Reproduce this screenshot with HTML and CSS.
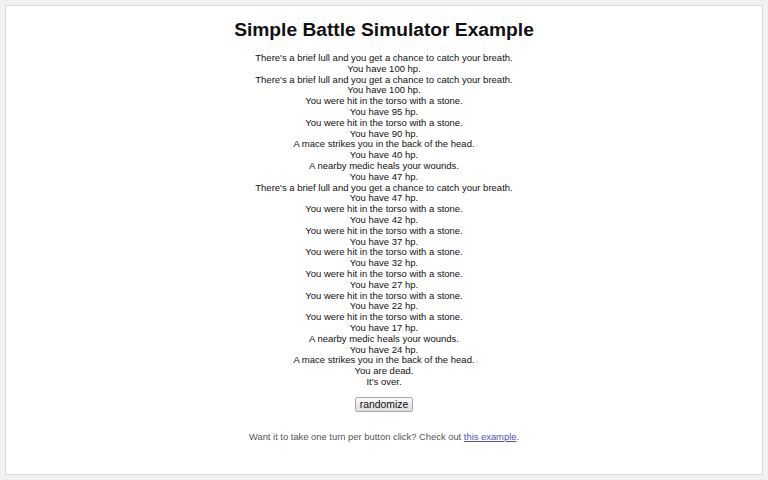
FILE: index.html
```html
<!DOCTYPE html>
<html lang="en">
<head>
  <meta charset="UTF-8" />
  <title>Simple Battle Simulator Example</title>
  <link rel="stylesheet" href="styles.css">
</head>
<body>

  <div class="page">
    <h1>Simple Battle Simulator Example</h1>

    <div id="log" class="log">
      <div>There's a brief lull and you get a chance to catch your breath.</div>
      <div>You have 100 hp.</div>
      <div>There's a brief lull and you get a chance to catch your breath.</div>
      <div>You have 100 hp.</div>
      <div>You were hit in the torso with a stone.</div>
      <div>You have 95 hp.</div>
      <div>You were hit in the torso with a stone.</div>
      <div>You have 90 hp.</div>
      <div>A mace strikes you in the back of the head.</div>
      <div>You have 40 hp.</div>
      <div>A nearby medic heals your wounds.</div>
      <div>You have 47 hp.</div>
      <div>There's a brief lull and you get a chance to catch your breath.</div>
      <div>You have 47 hp.</div>
      <div>You were hit in the torso with a stone.</div>
      <div>You have 42 hp.</div>
      <div>You were hit in the torso with a stone.</div>
      <div>You have 37 hp.</div>
      <div>You were hit in the torso with a stone.</div>
      <div>You have 32 hp.</div>
      <div>You were hit in the torso with a stone.</div>
      <div>You have 27 hp.</div>
      <div>You were hit in the torso with a stone.</div>
      <div>You have 22 hp.</div>
      <div>You were hit in the torso with a stone.</div>
      <div>You have 17 hp.</div>
      <div>A nearby medic heals your wounds.</div>
      <div>You have 24 hp.</div>
      <div>A mace strikes you in the back of the head.</div>
      <div>You are dead.</div>
      <div>It's over.</div>
    </div>

    <button class="randomize">randomize</button>

    <p class="note">Want it to take one turn per button click? Check out <a href="#">this example</a>.</p>
  </div>

</body>
</html>
```

FILE: styles.css
```css
body {
  font-family: "Liberation Sans", Arial, sans-serif;
  background-color: #f2f2f2;
  margin: 0;
  padding: 5px;
  height: 100vh;
  box-sizing: border-box;
}

.page {
  background: white;
  border: 1px solid #dcdcdc;
  height: 100%;
  box-sizing: border-box;
  text-align: center;
  padding-top: 12px;
}

h1 {
  font-size: 19.2px;
  font-weight: bold;
  margin: 0 0 11px;
  line-height: 24px;
  color: #111;
}

.log {
  font-size: 9.5px;
  line-height: 10.8px;
  color: #111;
}

.randomize {
  font-family: inherit;
  font-size: 10.4px;
  margin-top: 9px;
  padding: 1px 4px;
  height: 15px;
  line-height: 11px;
  border: 1px solid #a9a9a9;
  border-radius: 2px;
  background: linear-gradient(#fafafa, #dedede);
  color: #111;
}

.note {
  font-size: 9.4px;
  color: #555;
  margin: 19px 0 0;
}

.note a {
  color: #5050c8;
}
```
